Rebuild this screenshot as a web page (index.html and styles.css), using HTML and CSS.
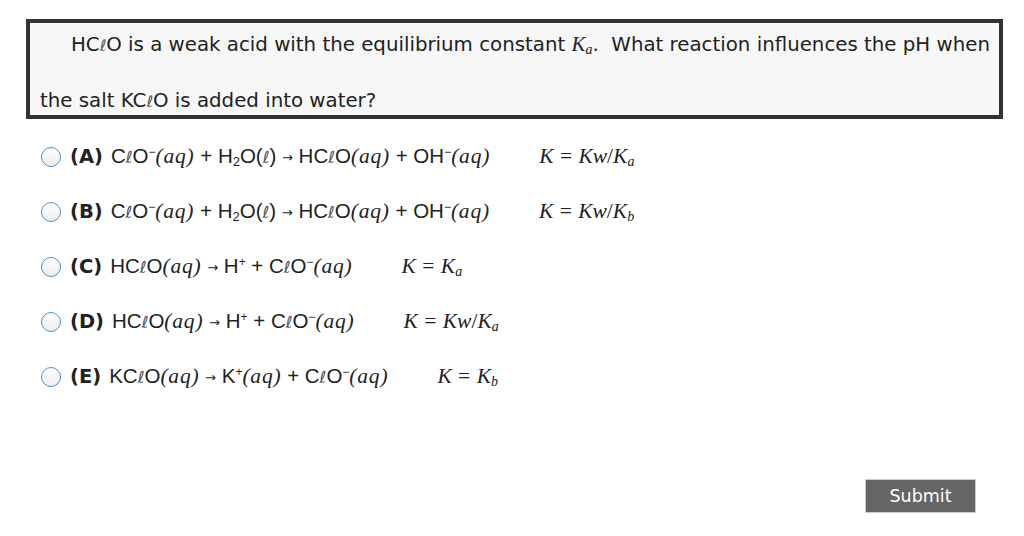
FILE: index.html
```html
<!DOCTYPE html>
<html>
<head>
<meta charset="utf-8">
<link rel="stylesheet" href="styles.css">
</head>
<body>
<div class="page">
  <div class="question">
    <div class="qline first">HC<span class="ell">ℓ</span>O is a weak acid with the equilibrium constant <span class="math"><i>K</i><sub><i>a</i></sub></span>.&nbsp; What reaction influences the pH when</div>
    <div class="qline second">the salt KC<span class="ell">ℓ</span>O is added into water?</div>
  </div>
  <div class="options">
    <label class="option"><span class="radio"></span><span class="letter">(A)</span><span class="eq">C<span class="ell">ℓ</span>O<sup>−</sup><span class="it">(aq)</span> + H<sub>2</sub>O(<span class="ell">ℓ</span>) <span class="arrow">→</span> HC<span class="ell">ℓ</span>O<span class="it">(aq)</span> + OH<sup>−</sup><span class="it">(aq)</span></span><span class="k"><i>K</i> = <i>Kw</i>/<i>K</i><sub><i>a</i></sub></span></label>
    <label class="option"><span class="radio"></span><span class="letter">(B)</span><span class="eq">C<span class="ell">ℓ</span>O<sup>−</sup><span class="it">(aq)</span> + H<sub>2</sub>O(<span class="ell">ℓ</span>) <span class="arrow">→</span> HC<span class="ell">ℓ</span>O<span class="it">(aq)</span> + OH<sup>−</sup><span class="it">(aq)</span></span><span class="k"><i>K</i> = <i>Kw</i>/<i>K</i><sub><i>b</i></sub></span></label>
    <label class="option"><span class="radio"></span><span class="letter">(C)</span><span class="eq">HC<span class="ell">ℓ</span>O<span class="it">(aq)</span> <span class="arrow">→</span> H<sup>+</sup> + C<span class="ell">ℓ</span>O<sup>−</sup><span class="it">(aq)</span></span><span class="k"><i>K</i> = <i>K</i><sub><i>a</i></sub></span></label>
    <label class="option"><span class="radio"></span><span class="letter">(D)</span><span class="eq">HC<span class="ell">ℓ</span>O<span class="it">(aq)</span> <span class="arrow">→</span> H<sup>+</sup> + C<span class="ell">ℓ</span>O<sup>−</sup><span class="it">(aq)</span></span><span class="k"><i>K</i> = <i>Kw</i>/<i>K</i><sub><i>a</i></sub></span></label>
    <label class="option"><span class="radio"></span><span class="letter">(E)</span><span class="eq">KC<span class="ell">ℓ</span>O<span class="it">(aq)</span> <span class="arrow">→</span> K<sup>+</sup><span class="it">(aq)</span> + C<span class="ell">ℓ</span>O<sup>−</sup><span class="it">(aq)</span></span><span class="k"><i>K</i> = <i>K</i><sub><i>b</i></sub></span></label>
  </div>
  <div class="actions">
    <button class="submit">Submit</button>
  </div>
</div>
</body>
</html>
```
FILE: styles.css
```css
html, body {
  margin: 0;
  padding: 0;
  background: #ffffff;
}
body {
  font-family: "DejaVu Sans", Verdana, sans-serif;
  color: #222;
}
.page {
  padding: 19px 21px 0 26px;
}
.question {
  border: 4px solid #333;
  background: #f7f7f7;
  height: 92px;
  box-sizing: content-box;
  font-size: 19.8px;
  padding: 0 0 0 10px;
}
.qline {
  line-height: 22px;
  white-space: nowrap;
}
.qline.first {
  padding-left: 31px;
  padding-top: 10px;
}
.qline.second {
  padding-top: 33px;
}
.math {
  font-family: "Liberation Serif", "Times New Roman", serif;
  font-size: 21px;
}
.math sub, .k sub {
  font-size: 14px;
  vertical-align: -3px;
  line-height: 0;
}
.ell {
  font-family: "DejaVu Sans", sans-serif;
  font-weight: normal;
  font-size: 0.8em;
  color: #555;
}
.options {
  padding-left: 15px;
  padding-top: 10px;
}
.option {
  display: flex;
  align-items: center;
  height: 55px;
  font-size: 19.5px;
  white-space: nowrap;
}
.radio {
  width: 18px;
  height: 18px;
  border: 1.5px solid #4d8fd6;
  border-radius: 50%;
  background: linear-gradient(#ffffff, #eeeeee);
  flex: none;
  margin-right: 9px;
}
.letter {
  font-weight: bold;
  margin-right: 8px;
}
.eq {
  font-family: "Liberation Sans", Arial, sans-serif;
  font-size: 20.5px;
}
.eq .it {
  font-family: "Liberation Serif", serif;
  font-style: italic;
  font-size: 21.5px;
  letter-spacing: 0.8px;
}
.eq sup {
  font-size: 12px;
  vertical-align: 7px;
  line-height: 0;
}
.eq sub {
  font-size: 13px;
  vertical-align: -3px;
  line-height: 0;
}
.arrow {
  font-family: "DejaVu Sans", sans-serif;
  font-size: 13px;
  vertical-align: 1px;
}
.k {
  font-family: "Liberation Serif", "Times New Roman", serif;
  font-size: 21.5px;
  margin-left: 49px;
  word-spacing: 1px;
}
.actions {
  display: flex;
  justify-content: flex-end;
  padding-top: 75px;
  padding-right: 27px;
}
.submit {
  background: #666;
  color: #fff;
  border: 1px solid #ccc;
  font-family: "DejaVu Sans", Verdana, sans-serif;
  font-size: 17.5px;
  width: 111px;
  height: 34px;
  padding: 0;
}
```
